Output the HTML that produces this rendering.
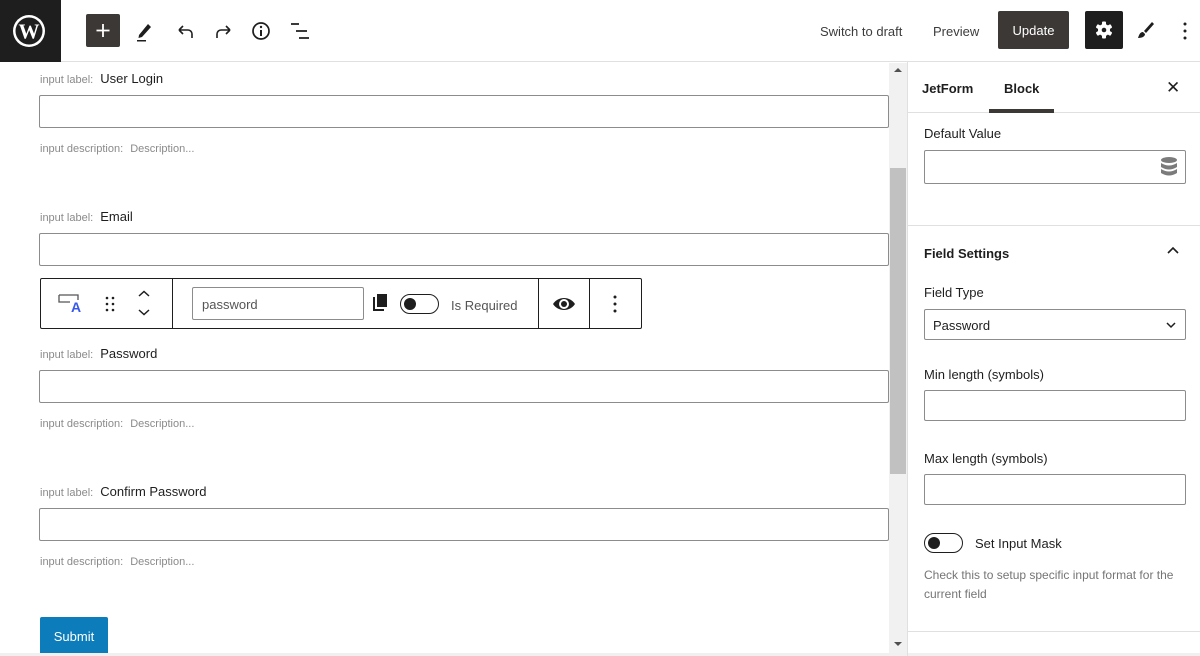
<!DOCTYPE html>
<html><head><meta charset="utf-8"><style>
*{box-sizing:border-box;margin:0;padding:0}
body{width:1200px;height:656px;overflow:hidden;background:#fff;font-family:"Liberation Sans",sans-serif;color:#1e1e1e;position:relative}
.abs{position:absolute}
.top{left:0;top:0;width:1200px;height:62px;border-bottom:1px solid #e0e0e0;background:#fff}
.logo{left:0;top:0;width:61px;height:62px;background:#1e1e1e}
.small{font-size:11px;color:#8a8a8a}
.lbl{font-size:13px;color:#1e1e1e}
.inp{border:1px solid #8c8c8c;border-radius:2px;background:#fff}
.side{left:907px;top:62px;width:293px;height:594px;border-left:1px solid #e0e0e0}
.st{font-size:13px;color:#1e1e1e}
.tog{width:39px;height:20px;border:1px solid #1e1e1e;border-radius:10px}
.tog:after{content:"";position:absolute;left:3px;top:3px;width:12px;height:12px;border-radius:50%;background:#1e1e1e}
</style></head><body>
<div class="abs top"></div>
<div class="abs logo"><svg width="61" height="62" viewBox="0 0 61 62"><circle cx="29" cy="31" r="16" fill="#fff"/><circle cx="29" cy="31" r="13.5" fill="#1e1e1e"/><text x="29" y="38.5" text-anchor="middle" font-family="Liberation Serif" font-weight="bold" font-size="21" fill="#fff">W</text></svg></div>
<div class="abs" style="left:86px;top:14px;width:34px;height:33px;background:#3c3835;border-radius:2px"><svg width="34" height="33"><path d="M17 10 V23 M10.5 16.5 H23.5" stroke="#fff" stroke-width="1.8"/></svg></div>
<svg class="abs" style="left:132px;top:18px" width="140" height="26" viewBox="0 0 140 26">
<path d="M7 17 L16 6 L19 9 L10 19 L6.5 20 Z" fill="#1e1e1e"/><rect x="5" y="22" width="9" height="1.5" fill="#1e1e1e"/>
<path d="M47 12 H56 a4 4 0 0 1 4 4 v4 M47 12 l4 -4 M47 12 l4 4" stroke="#1e1e1e" stroke-width="1.6" fill="none"/>
<path d="M98 12 H89 a4 4 0 0 0 -4 4 v4 M98 12 l-4 -4 M98 12 l-4 4" stroke="#1e1e1e" stroke-width="1.6" fill="none"/>
<circle cx="129" cy="13" r="8" stroke="#1e1e1e" stroke-width="1.7" fill="none"/><rect x="128" y="12" width="2" height="6" fill="#1e1e1e"/><circle cx="129" cy="9" r="1.2" fill="#1e1e1e"/>
</svg>
<svg class="abs" style="left:288px;top:18px" width="24" height="26"><path d="M3 6 H11 M8 13 H19 M11 20 H21" stroke="#1e1e1e" stroke-width="1.7"/></svg>
<div class="abs" style="left:820px;top:24px;font-size:13px;color:#3c3c3c">Switch to draft</div>
<div class="abs" style="left:933px;top:24px;font-size:13px;color:#3c3c3c">Preview</div>
<div class="abs" style="left:998px;top:11px;width:71px;height:38px;background:#3c3835;border-radius:2px;color:#fff;font-size:13px;text-align:center;line-height:40px">Update</div>
<div class="abs" style="left:1085px;top:11px;width:38px;height:38px;background:#1e1e1e;border-radius:2px"><svg width="38" height="38"><g fill="#fff"><rect x="17" y="10.5" width="4" height="17" rx="1"/><rect x="17" y="10.5" width="4" height="17" rx="1" transform="rotate(60 19 19)"/><rect x="17" y="10.5" width="4" height="17" rx="1" transform="rotate(120 19 19)"/><circle cx="19" cy="19" r="6"/></g><circle cx="19" cy="19" r="2.3" fill="#1e1e1e"/></svg></div>
<svg class="abs" style="left:1134px;top:18px" width="24" height="24"><path d="M18 4 L10 13 L12 15 L20 6 Z" fill="#1e1e1e"/><path d="M9 14 C6 14 5 17 4 20 C7 20 11 19 11 16 Z" fill="#1e1e1e"/></svg>
<svg class="abs" style="left:1175px;top:18px" width="20" height="26"><circle cx="10" cy="6" r="1.5" fill="#1e1e1e"/><circle cx="10" cy="13" r="1.5" fill="#1e1e1e"/><circle cx="10" cy="20" r="1.5" fill="#1e1e1e"/></svg>

<div class="abs small" style="left:40px;top:71px">input label: <span class="lbl" style="margin-left:4px">User Login</span></div>
<div class="abs inp" style="left:39px;top:95px;width:850px;height:33px"></div>
<div class="abs small" style="left:40px;top:143px">input description: <span style="margin-left:4px">Description...</span></div>
<div class="abs small" style="left:40px;top:209px">input label: <span class="lbl" style="margin-left:4px">Email</span></div>
<div class="abs inp" style="left:39px;top:233px;width:850px;height:33px"></div>

<div class="abs" style="left:40px;top:278px;width:602px;height:51px;border:1px solid #1e1e1e;border-radius:2px;background:#fff"></div>
<div class="abs" style="left:172px;top:279px;width:1px;height:49px;background:#1e1e1e"></div>
<div class="abs" style="left:538px;top:279px;width:1px;height:49px;background:#1e1e1e"></div>
<div class="abs" style="left:589px;top:279px;width:1px;height:49px;background:#1e1e1e"></div>
<svg class="abs" style="left:56px;top:290px" width="110" height="30"><path d="M3 5 H22 V10 M3 5 V12 H14" stroke="#555" stroke-width="1.3" fill="none"/><text x="15" y="22" font-family="Liberation Sans" font-weight="bold" font-size="14" fill="#3858e9">A</text>
<g fill="#1e1e1e"><circle cx="51" cy="8" r="1.3"/><circle cx="57" cy="8" r="1.3"/><circle cx="51" cy="14" r="1.3"/><circle cx="57" cy="14" r="1.3"/><circle cx="51" cy="20" r="1.3"/><circle cx="57" cy="20" r="1.3"/></g>
<path d="M83 6 L88 1.5 L93 6 M83 20 L88 24.5 L93 20" stroke="#1e1e1e" stroke-width="1.5" fill="none"/></svg>
<div class="abs" style="left:192px;top:287px;width:172px;height:33px;border:1px solid #8c8c8c;border-radius:2px;font-size:13px;color:#555;padding:9px 9px">password</div>
<svg class="abs" style="left:372px;top:293px" width="18" height="20"><rect x="5" y="1" width="10" height="13" fill="#1e1e1e"/><path d="M2 4 V17 H12" stroke="#1e1e1e" stroke-width="2" fill="none"/></svg>
<div class="abs tog" style="left:400px;top:294px"></div>
<div class="abs" style="left:451px;top:298px;font-size:13px;color:#555">Is Required</div>
<svg class="abs" style="left:551px;top:294px" width="26" height="20"><path d="M2 10 C7 2 19 2 24 10 C19 18 7 18 2 10 Z" fill="#1e1e1e"/><circle cx="13" cy="10" r="5" fill="#fff"/><circle cx="13" cy="10" r="3" fill="#1e1e1e"/></svg>
<svg class="abs" style="left:605px;top:293px" width="20" height="22"><circle cx="10" cy="4" r="1.5" fill="#1e1e1e"/><circle cx="10" cy="11" r="1.5" fill="#1e1e1e"/><circle cx="10" cy="18" r="1.5" fill="#1e1e1e"/></svg>

<div class="abs small" style="left:40px;top:346px">input label: <span class="lbl" style="margin-left:4px">Password</span></div>
<div class="abs inp" style="left:39px;top:370px;width:850px;height:33px"></div>
<div class="abs small" style="left:40px;top:418px">input description: <span style="margin-left:4px">Description...</span></div>
<div class="abs small" style="left:40px;top:484px">input label: <span class="lbl" style="margin-left:4px">Confirm Password</span></div>
<div class="abs inp" style="left:39px;top:508px;width:850px;height:33px"></div>
<div class="abs small" style="left:40px;top:556px">input description: <span style="margin-left:4px">Description...</span></div>
<div class="abs" style="left:40px;top:617px;width:68px;height:39px;background:#0c7cba;border-radius:2px;color:#fff;font-size:13px;text-align:center;line-height:39px">Submit</div>

<div class="abs" style="left:889px;top:63px;width:18px;height:593px;background:#f1f1f1"></div>
<div class="abs" style="left:890px;top:168px;width:16px;height:306px;background:#c1c1c1"></div>
<div class="abs" style="left:894px;top:68px;border:4px solid transparent;border-bottom:4px solid #505050;border-top:0"></div>
<div class="abs" style="left:894px;top:642px;border:4px solid transparent;border-top:4px solid #505050;border-bottom:0"></div>
<div class="abs" style="left:0;top:653px;width:1200px;height:3px;background:#f0f0f0"></div>

<div class="abs side"></div>
<div class="abs" style="left:908px;top:112px;width:292px;height:1px;background:#e0e0e0"></div>
<div class="abs" style="left:922px;top:81px;font-size:13px;font-weight:bold;color:#1e1e1e">JetForm</div>
<div class="abs" style="left:1004px;top:81px;font-size:13px;font-weight:bold;color:#1e1e1e">Block</div>
<div class="abs" style="left:989px;top:109px;width:65px;height:4px;background:#3c3835"></div>
<div class="abs" style="left:1166px;top:78px;font-size:17px;color:#1e1e1e">✕</div>
<div class="abs st" style="left:924px;top:126px">Default Value</div>
<div class="abs inp" style="left:924px;top:150px;width:262px;height:34px"></div>
<svg class="abs" style="left:1158px;top:155px" width="22" height="24"><g fill="#7b7b7b"><ellipse cx="11" cy="5" rx="8" ry="3"/><path d="M3 8 q8 5 16 0 v4 q-8 5 -16 0z"/><path d="M3 14 q8 5 16 0 v4 q-8 5 -16 0z"/></g></svg>
<div class="abs" style="left:908px;top:225px;width:292px;height:1px;background:#e0e0e0"></div>
<div class="abs st" style="left:924px;top:246px;font-weight:bold">Field Settings</div>
<svg class="abs" style="left:1166px;top:245px" width="14" height="12"><path d="M2 8 L7 3 L12 8" stroke="#1e1e1e" stroke-width="1.6" fill="none"/></svg>
<div class="abs st" style="left:924px;top:285px">Field Type</div>
<div class="abs inp" style="left:924px;top:309px;width:262px;height:31px;font-size:13px;padding:8px 8px">Password</div>
<svg class="abs" style="left:1165px;top:320px" width="12" height="10"><path d="M2 3 L6 7 L10 3" stroke="#1e1e1e" stroke-width="1.5" fill="none"/></svg>
<div class="abs st" style="left:924px;top:367px">Min length (symbols)</div>
<div class="abs inp" style="left:924px;top:390px;width:262px;height:31px"></div>
<div class="abs st" style="left:924px;top:451px">Max length (symbols)</div>
<div class="abs inp" style="left:924px;top:474px;width:262px;height:31px"></div>
<div class="abs tog" style="left:924px;top:533px"></div>
<div class="abs st" style="left:975px;top:536px">Set Input Mask</div>
<div class="abs" style="left:924px;top:566px;width:260px;font-size:12px;line-height:19px;color:#757575">Check this to setup specific input format for the current field</div>
<div class="abs" style="left:908px;top:631px;width:292px;height:1px;background:#e0e0e0"></div>
</body></html>
